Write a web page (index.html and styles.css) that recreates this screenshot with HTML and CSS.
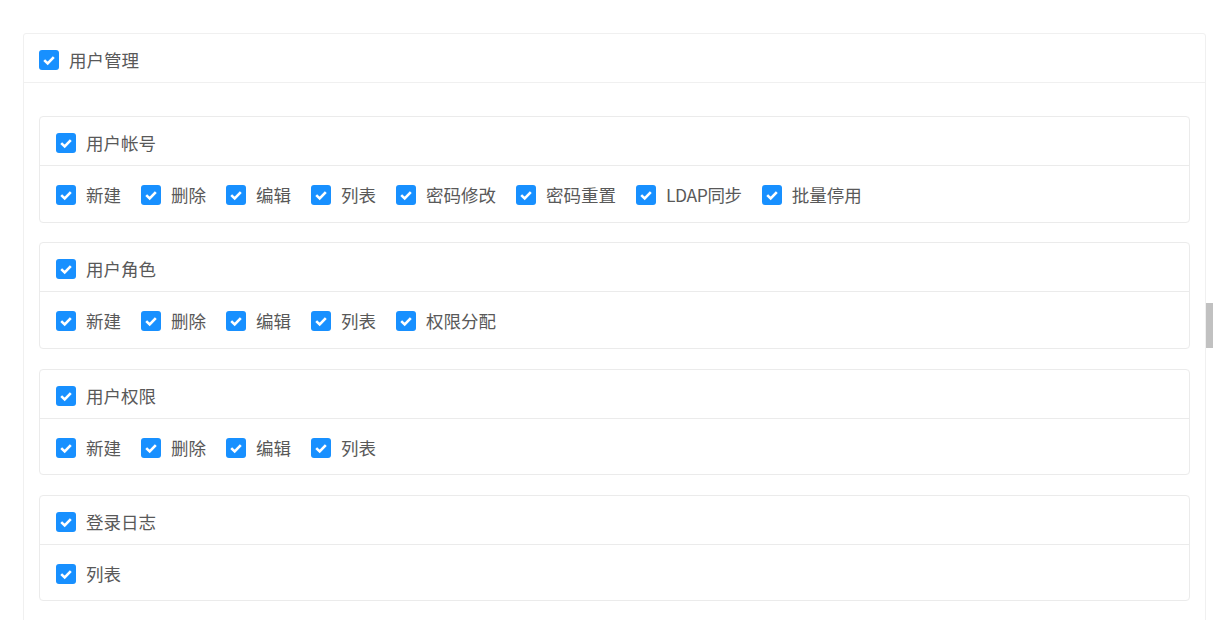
FILE: index.html
```html
<!DOCTYPE html>
<html lang="zh-CN">
<head>
<meta charset="utf-8">
<title>权限</title>
<link rel="stylesheet" href="styles.css">
</head>
<body>
<svg width="0" height="0" class="defs">
  <defs>
    <symbol id="ck" viewBox="0 0 20 20">
      <rect x="0" y="0" width="20" height="20" rx="3" fill="#1890ff"/>
      <path d="M5.2 10.1 L8.7 13.5 L14.8 7.2" fill="none" stroke="#fff" stroke-width="2.6" stroke-linejoin="miter" stroke-linecap="butt"/>
    </symbol>
  </defs>
</svg>
<div class="page">
  <div class="card">
    <div class="card-head">
      <label class="cb"><svg class="box"><use href="#ck"/></svg><span class="lbl">用户管理</span></label>
    </div>
    <div class="card-body">
      <div class="sub">
        <div class="sub-head"><label class="cb"><svg class="box"><use href="#ck"/></svg><span class="lbl">用户帐号</span></label></div>
        <div class="sub-body">
          <label class="cb"><svg class="box"><use href="#ck"/></svg><span class="lbl">新建</span></label>
          <label class="cb"><svg class="box"><use href="#ck"/></svg><span class="lbl">删除</span></label>
          <label class="cb"><svg class="box"><use href="#ck"/></svg><span class="lbl">编辑</span></label>
          <label class="cb"><svg class="box"><use href="#ck"/></svg><span class="lbl">列表</span></label>
          <label class="cb"><svg class="box"><use href="#ck"/></svg><span class="lbl">密码修改</span></label>
          <label class="cb"><svg class="box"><use href="#ck"/></svg><span class="lbl">密码重置</span></label>
          <label class="cb"><svg class="box"><use href="#ck"/></svg><span class="lbl lat">LDAP同步</span></label>
          <label class="cb"><svg class="box"><use href="#ck"/></svg><span class="lbl">批量停用</span></label>
        </div>
      </div>
      <div class="sub">
        <div class="sub-head"><label class="cb"><svg class="box"><use href="#ck"/></svg><span class="lbl">用户角色</span></label></div>
        <div class="sub-body">
          <label class="cb"><svg class="box"><use href="#ck"/></svg><span class="lbl">新建</span></label>
          <label class="cb"><svg class="box"><use href="#ck"/></svg><span class="lbl">删除</span></label>
          <label class="cb"><svg class="box"><use href="#ck"/></svg><span class="lbl">编辑</span></label>
          <label class="cb"><svg class="box"><use href="#ck"/></svg><span class="lbl">列表</span></label>
          <label class="cb"><svg class="box"><use href="#ck"/></svg><span class="lbl">权限分配</span></label>
        </div>
      </div>
      <div class="sub">
        <div class="sub-head"><label class="cb"><svg class="box"><use href="#ck"/></svg><span class="lbl">用户权限</span></label></div>
        <div class="sub-body">
          <label class="cb"><svg class="box"><use href="#ck"/></svg><span class="lbl">新建</span></label>
          <label class="cb"><svg class="box"><use href="#ck"/></svg><span class="lbl">删除</span></label>
          <label class="cb"><svg class="box"><use href="#ck"/></svg><span class="lbl">编辑</span></label>
          <label class="cb"><svg class="box"><use href="#ck"/></svg><span class="lbl">列表</span></label>
        </div>
      </div>
      <div class="sub">
        <div class="sub-head"><label class="cb"><svg class="box"><use href="#ck"/></svg><span class="lbl">登录日志</span></label></div>
        <div class="sub-body">
          <label class="cb"><svg class="box"><use href="#ck"/></svg><span class="lbl">列表</span></label>
        </div>
      </div>
    </div>
  </div>
</div>
<div class="scroll-thumb"></div>
</body>
</html>
```

FILE: styles.css
```css
html, body {
  margin: 0;
  padding: 0;
  overflow: hidden;
  background: #fff;
}
body {
  font-family: "Noto Sans CJK SC", "Noto Sans", sans-serif;
  font-size: 17.5px;
  color: #595959;
  position: relative;
  height: 620px;
}
.defs {
  position: absolute;
  width: 0;
  height: 0;
}
.page {
  padding: 33px 23px 0 23px;
}
.card {
  border: 1px solid #f0f0f0;
  border-radius: 3px;
}
.card-head {
  height: 20px;
  padding: 16px 15px 12px;
  border-bottom: 1px solid #f0f0f0;
  display: flex;
}
.card-body {
  padding: 33px 15px 20px 15px;
}
.sub {
  border: 1px solid #ebebeb;
  border-radius: 4px;
  margin-bottom: 19.83px;
}
.sub-head {
  height: 20px;
  padding: 16px 16px 12px;
  border-bottom: 1px solid #ebebeb;
  display: flex;
}
.sub-body {
  height: 20px;
  padding: 19px 16px 16.5px;
  display: flex;
  gap: 20px;
}
.cb {
  display: flex;
  align-items: center;
  height: 20px;
}
.box {
  width: 20px;
  height: 20px;
  flex: none;
  display: block;
}
.lbl {
  margin-left: 10px;
  line-height: 20px;
  white-space: nowrap;
}
.lat {
  letter-spacing: -0.4px;
}
.scroll-thumb {
  position: absolute;
  left: 1206px;
  top: 303px;
  width: 7px;
  height: 45px;
  background: #c1c1c1;
}
```
